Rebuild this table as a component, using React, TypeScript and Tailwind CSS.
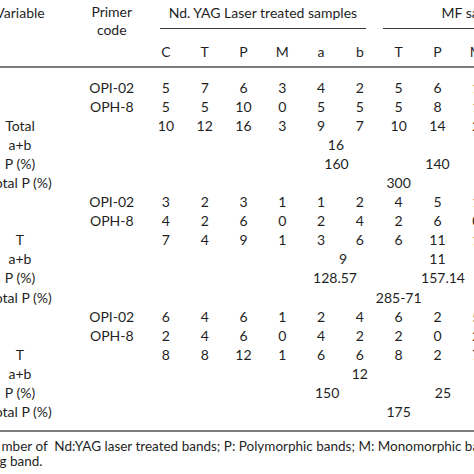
const gridCols = 'grid grid-cols-[80px_86.5px_repeat(11,38.8px)]'

type Merged = { col: string; text: string; pad?: string }

type Row =
  | { kind: 'primer'; label?: string; primer: string; values: string[] }
  | { kind: 'sum'; label: string; values: string[] }
  | { kind: 'merged'; label: string; items: Merged[] }

const groups: Row[][] = [
  [
    { kind: 'primer', primer: 'OPI-02', values: ['5', '7', '6', '3', '4', '2', '5', '6', '1'] },
    { kind: 'primer', primer: 'OPH-8', values: ['5', '5', '10', '0', '5', '5', '5', '8', '1'] },
    { kind: 'sum', label: 'Total', values: ['10', '12', '16', '3', '9', '7', '10', '14', '2'] },
    { kind: 'merged', label: 'a+b', items: [{ col: 'col-start-7 col-span-2', text: '16', pad: 'pr-[9px]' }] },
    {
      kind: 'merged',
      label: 'P (%)',
      items: [
        { col: 'col-start-7 col-span-2', text: '160', pad: 'pr-[8px]' },
        { col: 'col-start-10', text: '140' },
      ],
    },
    { kind: 'merged', label: 'Total P (%)', items: [{ col: 'col-start-9', text: '300' }] },
  ],
  [
    { kind: 'primer', primer: 'OPI-02', values: ['3', '2', '3', '1', '1', '2', '4', '5', '1'] },
    { kind: 'primer', primer: 'OPH-8', values: ['4', '2', '6', '0', '2', '4', '2', '6', '0'] },
    { kind: 'sum', label: 'T', values: ['7', '4', '9', '1', '3', '6', '6', '11', '1'] },
    {
      kind: 'merged',
      label: 'a+b',
      items: [
        { col: 'col-start-7 col-span-2', text: '9', pad: 'pl-[5px]' },
        { col: 'col-start-10', text: '11' },
      ],
    },
    {
      kind: 'merged',
      label: 'P (%)',
      items: [
        { col: 'col-start-7 col-span-2', text: '128.57', pad: 'pr-[11px]' },
        { col: 'col-start-10', text: '157.14', pad: 'pl-[11px]' },
      ],
    },
    { kind: 'merged', label: 'Total P (%)', items: [{ col: 'col-start-9', text: '285-71' }] },
  ],
  [
    { kind: 'primer', primer: 'OPI-02', values: ['6', '4', '6', '1', '2', '4', '6', '2', '5'] },
    { kind: 'primer', primer: 'OPH-8', values: ['2', '4', '6', '0', '4', '2', '2', '0', '2'] },
    { kind: 'sum', label: 'T', values: ['8', '8', '12', '1', '6', '6', '8', '2', '7'] },
    { kind: 'merged', label: 'a+b', items: [{ col: 'col-start-8', text: '12' }] },
    {
      kind: 'merged',
      label: 'P (%)',
      items: [
        { col: 'col-start-7', text: '150', pad: 'pl-[12px]' },
        { col: 'col-start-10', text: '25', pad: 'pl-[11px]' },
      ],
    },
    { kind: 'merged', label: 'Total P (%)', items: [{ col: 'col-start-9', text: '175' }] },
  ],
]

const subHeads = [
  { t: 'C', c: 'col-start-3' },
  { t: 'T', c: 'col-start-4' },
  { t: 'P', c: 'col-start-5' },
  { t: 'M', c: 'col-start-6' },
  { t: 'a', c: 'col-start-7' },
  { t: 'b', c: 'col-start-8' },
  { t: 'T', c: 'col-start-9' },
  { t: 'P', c: 'col-start-10' },
  { t: 'M', c: 'col-start-11' },
  { t: 'a', c: 'col-start-12' },
  { t: 'b', c: 'col-start-13' },
]

function Cell({ children, className = '' }: { children?: React.ReactNode; className?: string }) {
  return <div className={`flex justify-center whitespace-nowrap ${className}`}>{children}</div>
}

function TableRow({ row }: { row: Row }) {
  return (
    <div className={`${gridCols} h-[19.1px] items-center leading-[19px]`}>
      <Cell className="col-start-1">{row.kind !== 'primer' ? row.label : ''}</Cell>
      {row.kind === 'primer' && <Cell className="col-start-2 pl-[17px]">{row.primer}</Cell>}
      {row.kind !== 'merged' &&
        row.values.map((v, i) => (
          <Cell key={i} className={i === 0 ? 'col-start-3' : ''}>
            {v}
          </Cell>
        ))}
      {row.kind === 'merged' &&
        row.items.map((m, i) => (
          <Cell key={i} className={`${m.col} row-start-1 ${m.pad ?? ''}`}>
            {m.text}
          </Cell>
        ))}
    </div>
  )
}

export default function App() {
  return (
    <div className="h-[474px] w-[474px] overflow-hidden bg-white font-[Lato,sans-serif] text-[14px] text-[#1f1f1f]">
      <div className="-ml-[20px] w-[594px]">
        {/* header */}
        <div className={`${gridCols} grid-rows-[27.3px_37.2px] pt-[1.5px]`}>
          <Cell className="col-start-1 row-start-1 leading-[21px]">Variable</Cell>
          <div className="col-start-2 row-start-1 row-span-2 flex flex-col items-center pl-[17px] pt-[1.5px] leading-[18px]">
            <span>Primer</span>
            <span>code</span>
          </div>
          <Cell className="col-start-3 col-span-6 row-start-1 mx-[13.5px] border-b border-[#3a3a3a] leading-[21px]">
            Nd. YAG Laser treated samples
          </Cell>
          <Cell className="col-start-9 col-span-5 row-start-1 ml-[4px] border-b border-[#3a3a3a] leading-[21px]">
            MF samples
          </Cell>
          {subHeads.map((h, i) => (
            <Cell key={i} className={`${h.c} row-start-2 pt-[13px] leading-[19px]`}>
              {h.t}
            </Cell>
          ))}
        </div>

        {/* body */}
        <div className="border-y-[2.5px] border-[#7c7c7c] pt-[9.5px] pb-[9px]">
          {groups.map((g, gi) => (
            <div key={gi}>
              {g.map((r, ri) => (
                <TableRow key={ri} row={r} />
              ))}
            </div>
          ))}
        </div>
      </div>

      {/* footnote */}
      <div className="pl-[1.5px] pt-[6.5px] text-[13.5px] leading-[15.5px] whitespace-nowrap">
        <p>mber of&nbsp; Nd:YAG laser treated bands; P: Polymorphic bands; M: Monomorphic bands</p>
        <p className="-ml-[2px]">g band.</p>
      </div>
    </div>
  )
}
